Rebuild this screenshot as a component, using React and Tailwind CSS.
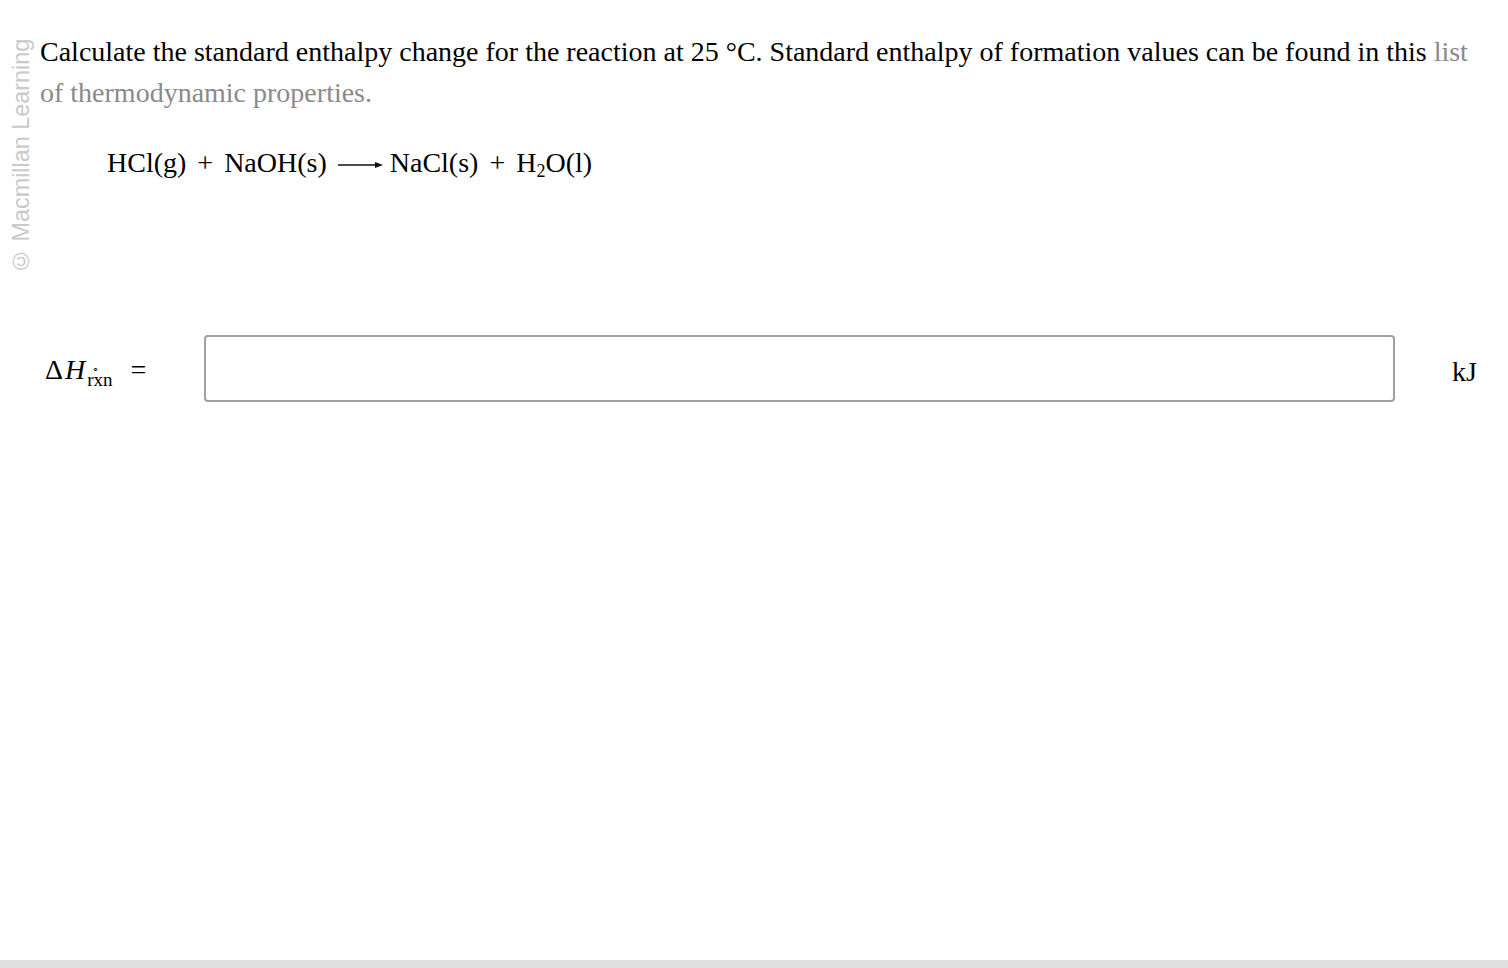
export default function App() {
  return (
    <div className="relative flex h-[968px] w-full flex-col bg-white text-black [font-family:'Liberation_Serif',serif]">
      <div className="absolute left-[10px] top-[38px] h-[236px] rotate-180 text-[23.4px] leading-[23px] text-[#c9c9c9] [writing-mode:vertical-rl] [font-family:'Liberation_Sans',Arial,sans-serif]">
        © Macmillan Learning
      </div>
      <div className="flex-1 pl-[40px] pr-[36px] pt-[31px]">
        <p className="text-[28px] leading-[41px]">
          Calculate the standard enthalpy change for the reaction at 25 °C. Standard enthalpy of formation values can be found in this{" "}
          <span className="text-[#8a8a8a]">list of thermodynamic properties.</span>
        </p>
        <div className="mt-[35px] flex items-center pl-[67px] text-[28px] leading-[30px]">
          <span>HCl(g)</span>
          <span className="ml-[11px]">+</span>
          <span className="ml-[11px]">NaOH(s)</span>
          <svg className="ml-[11px] mr-[7px] mt-[4px]" width="45" height="10" viewBox="0 0 45 10">
            <line x1="0" y1="5" x2="40" y2="5" stroke="#111" strokeWidth="1.4" />
            <path d="M37 2 L45 5 L37 8 Z" fill="#111" />
          </svg>
          <span>NaCl(s)</span>
          <span className="ml-[11px]">+</span>
          <span className="ml-[11px]">
            H<sub className="text-[18px]">2</sub>O(l)
          </span>
        </div>
        <div className="mr-[-5px] mt-[157px] flex items-center pl-[5px]">
          <div className="mt-[6px] w-[159px] text-[28px] leading-[30px]">
            Δ<i className="ml-[2px]">H</i>
            <span className="relative ml-[2px] inline-block align-[-7px] text-[19px] leading-[18px]">
              <span className="absolute left-[5px] top-[-11px] text-[11px]">∘</span>
              rxn
            </span>
            <span className="ml-[18px]">=</span>
          </div>
          <div className="h-[67px] flex-1 rounded-[4px] border-2 border-[#a0a0a0]"></div>
          <div className="ml-[57px] mt-[6px] text-[28px]">kJ</div>
        </div>
      </div>
      <div className="h-[8px] w-full bg-[#e0e0e0]"></div>
    </div>
  );
}
